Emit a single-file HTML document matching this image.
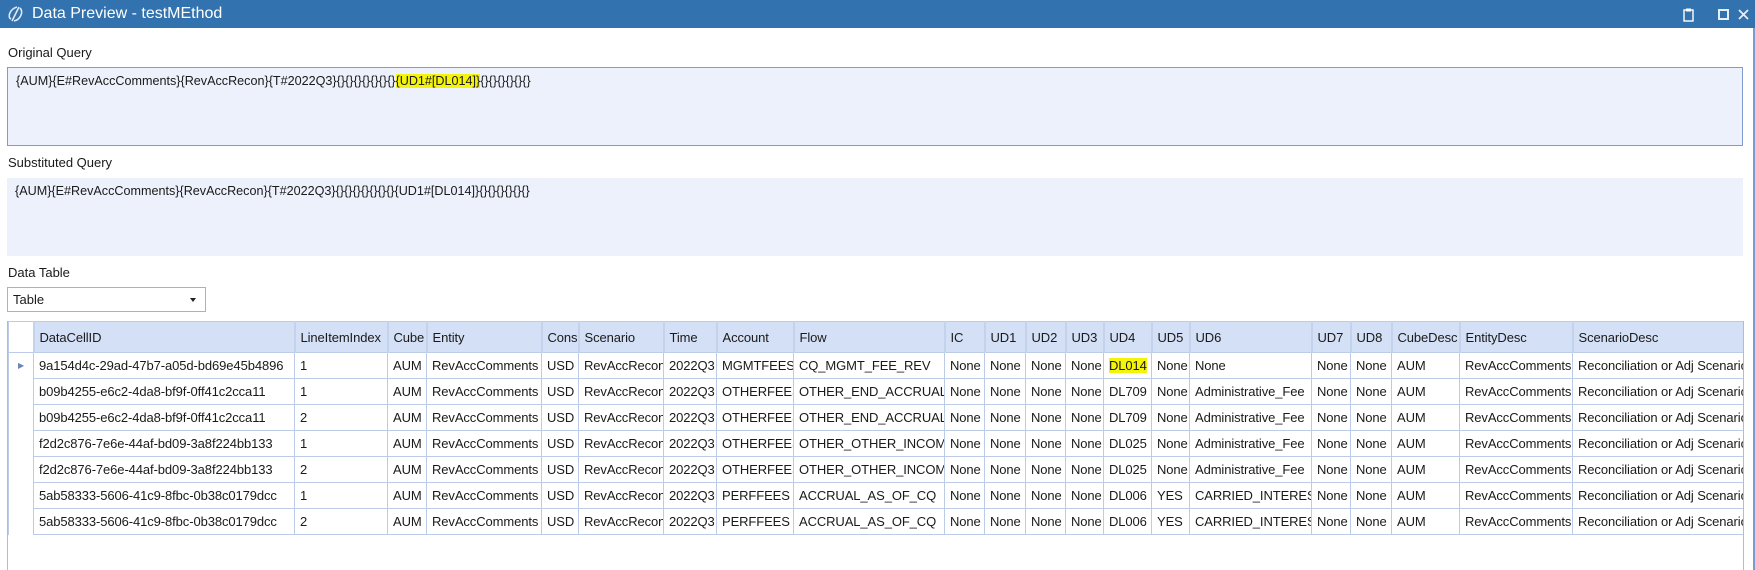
<!DOCTYPE html>
<html><head><meta charset="utf-8"><style>
*{box-sizing:border-box;margin:0;padding:0}
body{width:1755px;height:570px;overflow:hidden;background:#fff;font-family:"Segoe UI","Liberation Sans",sans-serif;font-size:13px;color:#1a1a1a;position:relative}
.title{position:absolute;left:0;top:0;width:1755px;height:28px;background:#3272ae;color:#fff;font-size:16px;line-height:27px}
.title .t{position:absolute;left:32px;top:0}
.rb{position:absolute;right:0;top:28px;width:2px;height:542px;background:#7a9bd0}
.lbl{position:absolute;left:8px;font-size:13px}
.box{position:absolute;left:7px;width:1736px;background:#edf1fc;padding:6px 8px;font-size:12.6px}
.hl{background:#f4f40a}
.dd{position:absolute;left:7px;top:287px;width:199px;height:25px;border:1px solid #9db3dd;padding:4px 5px;font-size:13px}
.dd:after{content:"";position:absolute;right:9px;top:10px;border-left:3.5px solid transparent;border-right:3.5px solid transparent;border-top:4px solid #222}
.tw{position:absolute;left:7px;top:321px;width:1737px;height:249px;border-left:1px solid #a9bde3;border-right:1px solid #a9bde3;overflow:hidden}
table{border-collapse:collapse;table-layout:fixed;width:1736px}
td,th{border:1px solid #bccbe8;white-space:nowrap;overflow:hidden;padding:0 4px 0 5px;text-align:left;font-weight:normal;font-size:13px;letter-spacing:-0.1px}
th{background:#d4e0f6;height:31px;border-right:2px solid #c4d2ec}
td{height:26px}
th.rh{background:#fff}
td.rh{border-top:none;border-bottom:none;color:#6a86b8;font-size:8px;padding-left:9px}
</style></head><body>
<div class="title"><svg style="position:absolute;left:6px;top:5px" width="20" height="18" viewBox="0 0 20 18"><path d="M5 14 C1 12 4 4 11 2 M8 16 C14 15 18 7 14 3 M13 2 L6 16" stroke="#dfe8f4" stroke-width="1.6" fill="none"/></svg><span class="t">Data Preview - testMEthod</span>
<svg style="position:absolute;left:1683px;top:8px" width="11" height="14" viewBox="0 0 11 14"><rect x="1" y="2" width="9" height="11" fill="none" stroke="#fff" stroke-width="1.4"/><rect x="3" y="0.5" width="5" height="3" fill="#fff"/></svg>
<svg style="position:absolute;left:1718px;top:9px" width="11" height="11"><rect x="1" y="1" width="9" height="9" fill="none" stroke="#e6eef8" stroke-width="2"/></svg>
<svg style="position:absolute;left:1738px;top:9px" width="11" height="11"><path d="M1 1L10 10M10 1L1 10" stroke="#e6eef8" stroke-width="1.8"/></svg></div>
<div class="rb"></div>
<div class="lbl" style="top:45px">Original Query</div>
<div class="box" style="top:67px;height:79px;border:1px solid #7f9bd0">{AUM}{E#RevAccComments}{RevAccRecon}{T#2022Q3}{}{}{}{}{}{}{}<span class="hl">{UD1#[DL014]}</span>{}{}{}{}{}{}</div>
<div class="lbl" style="top:155px">Substituted Query</div>
<div class="box" style="top:178px;height:78px">{AUM}{E#RevAccComments}{RevAccRecon}{T#2022Q3}{}{}{}{}{}{}{}{UD1#[DL014]}{}{}{}{}{}{}</div>
<div class="lbl" style="top:265px">Data Table</div>
<div class="dd">Table</div>
<div class="tw"><table>
<colgroup><col style="width:25px"><col style="width:261px"><col style="width:93px"><col style="width:39px"><col style="width:115px"><col style="width:37px"><col style="width:85px"><col style="width:53px"><col style="width:77px"><col style="width:151px"><col style="width:40px"><col style="width:41px"><col style="width:40px"><col style="width:38px"><col style="width:48px"><col style="width:38px"><col style="width:122px"><col style="width:39px"><col style="width:41px"><col style="width:68px"><col style="width:113px"><col style="width:172px"></colgroup>
<tr><th class="rh"></th><th>DataCellID</th><th>LineItemIndex</th><th>Cube</th><th>Entity</th><th>Cons</th><th>Scenario</th><th>Time</th><th>Account</th><th>Flow</th><th>IC</th><th>UD1</th><th>UD2</th><th>UD3</th><th>UD4</th><th>UD5</th><th>UD6</th><th>UD7</th><th>UD8</th><th>CubeDesc</th><th>EntityDesc</th><th>ScenarioDesc</th></tr>
<tr><td class="rh">▶</td><td>9a154d4c-29ad-47b7-a05d-bd69e45b4896</td><td>1</td><td>AUM</td><td>RevAccComments</td><td>USD</td><td>RevAccRecon</td><td>2022Q3</td><td>MGMTFEES</td><td>CQ_MGMT_FEE_REV</td><td>None</td><td>None</td><td>None</td><td>None</td><td><span class="hl">DL014</span></td><td>None</td><td>None</td><td>None</td><td>None</td><td>AUM</td><td>RevAccComments</td><td>Reconciliation or Adj Scenario</td></tr>
<tr><td class="rh"></td><td>b09b4255-e6c2-4da8-bf9f-0ff41c2cca11</td><td>1</td><td>AUM</td><td>RevAccComments</td><td>USD</td><td>RevAccRecon</td><td>2022Q3</td><td>OTHERFEES</td><td>OTHER_END_ACCRUAL</td><td>None</td><td>None</td><td>None</td><td>None</td><td>DL709</td><td>None</td><td>Administrative_Fee</td><td>None</td><td>None</td><td>AUM</td><td>RevAccComments</td><td>Reconciliation or Adj Scenario</td></tr>
<tr><td class="rh"></td><td>b09b4255-e6c2-4da8-bf9f-0ff41c2cca11</td><td>2</td><td>AUM</td><td>RevAccComments</td><td>USD</td><td>RevAccRecon</td><td>2022Q3</td><td>OTHERFEES</td><td>OTHER_END_ACCRUAL</td><td>None</td><td>None</td><td>None</td><td>None</td><td>DL709</td><td>None</td><td>Administrative_Fee</td><td>None</td><td>None</td><td>AUM</td><td>RevAccComments</td><td>Reconciliation or Adj Scenario</td></tr>
<tr><td class="rh"></td><td>f2d2c876-7e6e-44af-bd09-3a8f224bb133</td><td>1</td><td>AUM</td><td>RevAccComments</td><td>USD</td><td>RevAccRecon</td><td>2022Q3</td><td>OTHERFEES</td><td>OTHER_OTHER_INCOME</td><td>None</td><td>None</td><td>None</td><td>None</td><td>DL025</td><td>None</td><td>Administrative_Fee</td><td>None</td><td>None</td><td>AUM</td><td>RevAccComments</td><td>Reconciliation or Adj Scenario</td></tr>
<tr><td class="rh"></td><td>f2d2c876-7e6e-44af-bd09-3a8f224bb133</td><td>2</td><td>AUM</td><td>RevAccComments</td><td>USD</td><td>RevAccRecon</td><td>2022Q3</td><td>OTHERFEES</td><td>OTHER_OTHER_INCOME</td><td>None</td><td>None</td><td>None</td><td>None</td><td>DL025</td><td>None</td><td>Administrative_Fee</td><td>None</td><td>None</td><td>AUM</td><td>RevAccComments</td><td>Reconciliation or Adj Scenario</td></tr>
<tr><td class="rh"></td><td>5ab58333-5606-41c9-8fbc-0b38c0179dcc</td><td>1</td><td>AUM</td><td>RevAccComments</td><td>USD</td><td>RevAccRecon</td><td>2022Q3</td><td>PERFFEES</td><td>ACCRUAL_AS_OF_CQ</td><td>None</td><td>None</td><td>None</td><td>None</td><td>DL006</td><td>YES</td><td>CARRIED_INTEREST</td><td>None</td><td>None</td><td>AUM</td><td>RevAccComments</td><td>Reconciliation or Adj Scenario</td></tr>
<tr><td class="rh"></td><td>5ab58333-5606-41c9-8fbc-0b38c0179dcc</td><td>2</td><td>AUM</td><td>RevAccComments</td><td>USD</td><td>RevAccRecon</td><td>2022Q3</td><td>PERFFEES</td><td>ACCRUAL_AS_OF_CQ</td><td>None</td><td>None</td><td>None</td><td>None</td><td>DL006</td><td>YES</td><td>CARRIED_INTEREST</td><td>None</td><td>None</td><td>AUM</td><td>RevAccComments</td><td>Reconciliation or Adj Scenario</td></tr>
</table></div>
</body></html>
